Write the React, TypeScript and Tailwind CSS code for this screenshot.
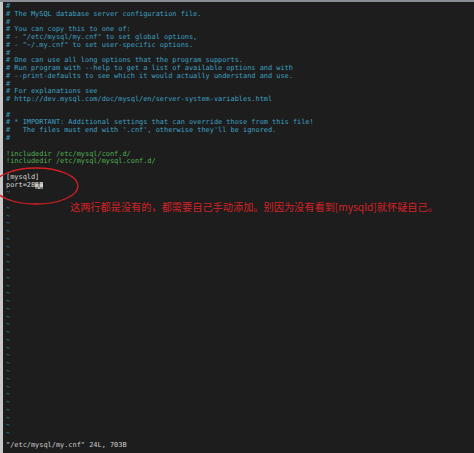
const comment = "text-[#3ea2c4]"
const green = "text-[#52b452]"

const lines: { text: string; color: string }[] = [
  { text: "#", color: comment },
  { text: "# The MySQL database server configuration file.", color: comment },
  { text: "#", color: comment },
  { text: "# You can copy this to one of:", color: comment },
  { text: "# - \"/etc/mysql/my.cnf\" to set global options,", color: comment },
  { text: "# - \"~/.my.cnf\" to set user-specific options.", color: comment },
  { text: "#", color: comment },
  { text: "# One can use all long options that the program supports.", color: comment },
  { text: "# Run program with --help to get a list of available options and with", color: comment },
  { text: "# --print-defaults to see which it would actually understand and use.", color: comment },
  { text: "#", color: comment },
  { text: "# For explanations see", color: comment },
  { text: "# http://dev.mysql.com/doc/mysql/en/server-system-variables.html", color: comment },
  { text: "", color: comment },
  { text: "#", color: comment },
  { text: "# * IMPORTANT: Additional settings that can override those from this file!", color: comment },
  { text: "#   The files must end with '.cnf', otherwise they'll be ignored.", color: comment },
  { text: "#", color: comment },
  { text: "", color: comment },
  { text: "!includedir /etc/mysql/conf.d/", color: green },
  { text: "!includedir /etc/mysql/mysql.conf.d/", color: green },
  { text: "", color: comment },
  { text: "[mysqld]", color: "text-[#dadada]" },
]

const tildes = Array.from({ length: 32 })

export default function App() {
  return (
    <div className="relative h-[453px] w-[474px] overflow-hidden bg-[#1d1d1d]">
      <div className="h-[2px] w-full bg-[#8b8e94]" />
      <div className="flex h-[451px]">
        <div className="w-[3px] bg-[#c9c9c9]" />
        <div
          className="flex flex-1 flex-col pt-[1px] pl-[3px] text-[6.92px] leading-[7.78px] whitespace-pre"
          style={{ fontFamily: '"DejaVu Sans Mono", monospace' }}
        >
          {lines.map((l, i) => (
            <div key={i} className={`h-[7.78px] ${l.color}`}>
              {l.text}
            </div>
          ))}
          <div className="flex h-[7.78px] items-center text-[#dadada]">
            port=28
            <span className="grid h-[7px] w-[8px] grid-cols-3 grid-rows-3">
              <span className="bg-[#9a9a9a]" />
              <span className="bg-[#5a5a5a]" />
              <span className="bg-[#b5b5b5]" />
              <span className="bg-[#c4c4c4]" />
              <span className="bg-[#8c8c8c]" />
              <span className="bg-[#d0d0d0]" />
              <span className="bg-[#6d6d6d]" />
              <span className="bg-[#a8a8a8]" />
              <span className="bg-[#7a7a7a]" />
            </span>
          </div>
          {tildes.map((_, i) => (
            <div key={i} className="h-[7.78px] text-[#3a8aa8]">
              ~
            </div>
          ))}
          <div className="mt-[4px] h-[7.78px] text-[#d0d0d0]">"/etc/mysql/my.cnf" 24L, 703B</div>
        </div>
      </div>

      {/* red annotation */}
      <svg className="absolute top-0 left-0" width="474" height="453">
        <ellipse cx="36" cy="186" rx="42" ry="18" fill="none" stroke="#d61f26" strokeWidth="1.3" />
      </svg>
      <div
        className="absolute top-[200px] left-[70px] text-[10.2px] leading-[13px] whitespace-nowrap text-[#d42226]"
        style={{ fontFamily: '"Noto Sans CJK SC", "Noto Sans", sans-serif' }}
      >
        这两行都是没有的，都需要自己手动添加。别因为没有看到[mysqld]就怀疑自己。
      </div>
    </div>
  )
}
